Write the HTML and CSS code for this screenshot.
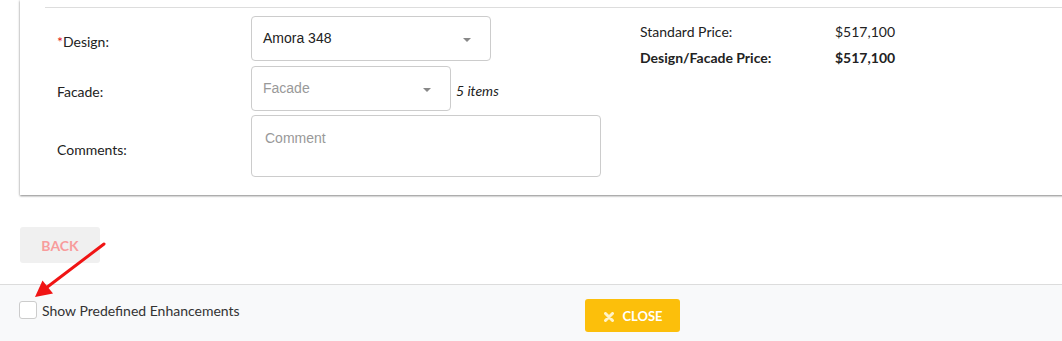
FILE: index.html
```html
<!DOCTYPE html>
<html>
<head>
    <link rel="stylesheet" href="styles.css">
</head>
<body>
    <div class="page">
        <div class="card">
            <hr class="card-rule">
            <div class="card-body">
                <div class="form">
                    <div class="form-row">
                        <label class="form-label"><span class="req">*</span>Design:</label>
                        <div class="select select-design">
                            <span class="select-value">Amora 348</span>
                            <span class="caret"></span>
                        </div>
                    </div>
                    <div class="form-row">
                        <label class="form-label">Facade:</label>
                        <div class="select select-facade">
                            <span class="select-placeholder">Facade</span>
                            <span class="caret"></span>
                        </div>
                        <span class="item-count">5 items</span>
                    </div>
                    <div class="form-row">
                        <label class="form-label">Comments:</label>
                        <textarea class="comment" placeholder="Comment"></textarea>
                    </div>
                </div>
                <div class="prices">
                    <div class="price-row">
                        <span class="price-label">Standard Price:</span>
                        <span class="price-value">$517,100</span>
                    </div>
                    <div class="price-row price-total">
                        <span class="price-label">Design/Facade Price:</span>
                        <span class="price-value">$517,100</span>
                    </div>
                </div>
            </div>
        </div>

        <div class="actions">
            <button class="btn btn-back">BACK</button>
        </div>
    </div>

    <div class="footer">
        <label class="check">
            <span class="check-box"></span>
            Show Predefined Enhancements
        </label>
        <button class="btn btn-close">
            <svg class="close-icon" width="10" height="10" viewBox="0 0 10 10">
                <path d="M1.5 1.5 L8.5 8.5 M8.5 1.5 L1.5 8.5" stroke="#fff3c8" stroke-width="3" stroke-linecap="round"/>
            </svg>
            CLOSE
        </button>
    </div>

    <!-- annotation arrow -->
    <svg class="annotation" width="1062" height="341" viewBox="0 0 1062 341">
        <line x1="104" y1="244" x2="46" y2="288" stroke="#f01414" stroke-width="3" stroke-linecap="round"/>
        <polygon points="35,297 42.5,280.5 53,293.5" fill="#f01414"/>
    </svg>
</body>
</html>
```

FILE: styles.css
```css
body {
    margin: 0;
    background-color: #fff;
    font-family: Lato, "Liberation Sans", sans-serif;
    color: #333;
    overflow: hidden;
    height: 341px;
    position: relative;
}
.page {
    height: 284px;
}
.card {
    margin-left: 20px;
    margin-right: -20px;
    background: #fff;
    box-shadow: 0 1px 2px rgba(0, 0, 0, 0.45), -1px 0 3px rgba(0, 0, 0, 0.06);
    padding-top: 7px;
    padding-bottom: 18px;
}
.card-rule {
    margin: 0 0 0 25px;
    border: 0;
    border-top: 1px solid #ddd;
}
.card-body {
    display: flex;
    padding-left: 37px;
    padding-top: 8px;
}
.form {
    display: flex;
    flex-direction: column;
    gap: 5px;
}
.form-row {
    display: flex;
    align-items: center;
}
.form-row:last-child {
    margin-top: -1px;
}
.form-label {
    width: 194px;
    font-size: 14px;
    color: #222;
    padding-top: 6px;
}
.req {
    color: #e21b1b;
}
.select {
    box-sizing: border-box;
    height: 45px;
    border: 1px solid #ccc;
    border-radius: 4px;
    display: flex;
    align-items: center;
    padding: 0 18px 0 11px;
    font-family: "Liberation Sans", Arial, sans-serif;
    font-size: 14px;
    padding-bottom: 2px;
}
.select-design {
    width: 240px;
}
.select-facade {
    width: 200px;
}
.select-value {
    flex: 1;
    color: #222;
}
.select-placeholder {
    flex: 1;
    color: #999;
}
.caret {
    width: 0;
    height: 0;
    border-left: 4px solid transparent;
    border-right: 4px solid transparent;
    border-top: 4px solid #888;
    margin-top: 5px;
    margin-right: 1px;
}
.item-count {
    font-style: italic;
    font-size: 14px;
    color: #222;
    margin-left: 5px;
    padding-top: 4px;
}
.comment {
    box-sizing: border-box;
    width: 350px;
    height: 62px;
    border: 1px solid #ccc;
    border-radius: 4px;
    padding: 14px 13px;
    font-family: "Liberation Sans", Arial, sans-serif;
    font-size: 14px;
    resize: none;
    margin: 0;
}
.comment::placeholder {
    color: #999;
}
.prices {
    margin-left: 39px;
    display: flex;
    flex-direction: column;
    gap: 8px;
    padding-top: 7px;
}
.price-row {
    display: flex;
    font-size: 14px;
    line-height: 18px;
    color: #222;
}
.price-label {
    width: 195px;
}
.price-total {
    font-weight: bold;
}
.actions {
    padding: 32px 0 0 20px;
}
.btn {
    border: 0;
    border-radius: 3px;
    font-family: Lato, sans-serif;
    font-weight: bold;
    font-size: 13px;
    cursor: pointer;
}
.btn-back {
    width: 80px;
    height: 36px;
    background: #f0f0f0;
    color: #f89c9c;
    font-size: 14px;
    padding-top: 2px;
}
.footer {
    box-sizing: border-box;
    height: 57px;
    border-top: 1px solid #dcdcdc;
    background: #f8f9fa;
    display: flex;
    align-items: flex-start;
    padding: 14px 0 0 19px;
}
.check {
    width: 566px;
    display: flex;
    align-items: center;
    gap: 5px;
    font-size: 14px;
    color: #333;
    margin-top: 2px;
}
.check-box {
    box-sizing: border-box;
    width: 18px;
    height: 18px;
    border: 1px solid #ccc;
    border-radius: 3px;
    background: #fff;
}
.btn-close {
    width: 95px;
    height: 33px;
    background: #fcbf0b;
    color: #fff;
    display: flex;
    align-items: center;
    justify-content: center;
    gap: 8px;
    padding: 0 0 0 2px;
}
.close-icon {
    margin-top: 2px;
}
.annotation {
    position: absolute;
    left: 0;
    top: 0;
    pointer-events: none;
}
```
